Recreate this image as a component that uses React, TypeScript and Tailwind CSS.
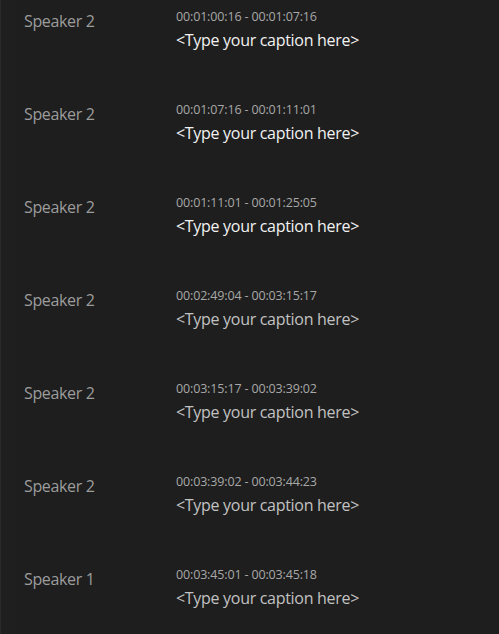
const rows = [
  { speaker: 'Speaker 2', time: '00:01:00:16 - 00:01:07:16', active: true },
  { speaker: 'Speaker 2', time: '00:01:07:16 - 00:01:11:01', active: true },
  { speaker: 'Speaker 2', time: '00:01:11:01 - 00:01:25:05', active: true },
  { speaker: 'Speaker 2', time: '00:02:49:04 - 00:03:15:17', active: false },
  { speaker: 'Speaker 2', time: '00:03:15:17 - 00:03:39:02', active: false },
  { speaker: 'Speaker 2', time: '00:03:39:02 - 00:03:44:23', active: false },
  { speaker: 'Speaker 1', time: '00:03:45:01 - 00:03:45:18', active: false },
]

export default function App() {
  return (
    <div
      className="flex h-[634px] w-[499px] overflow-hidden bg-[#1e1e1e]"
      style={{ fontFamily: '"Open Sans", "Noto Sans", sans-serif' }}
    >
      <div className="w-[15px] shrink-0 border-l border-[#2a2a2a] bg-[#1f1f1f]" />
      <div className="flex flex-1 flex-col">
        <div className="h-[5px] bg-[#212121]" />
        <div className="h-px bg-[#0a0a0a]" />
        <div className="flex flex-col">
          {rows.map((r, i) => (
            <div key={i} className="flex h-[93px]">
              <div className="w-[161px] shrink-0 pl-[9px] pt-[9px] text-[16px] tracking-[-0.35px] text-[#9c9c9c]">
                {r.speaker}
              </div>
              <div className="flex flex-col">
                <div className="pt-[9px] text-[12.5px] leading-[16px] tracking-[-0.15px] text-[#a8a8a8]">
                  {r.time}
                </div>
                <div
                  className={
                    'pt-[4px] text-[16px] leading-[22px] tracking-[-0.3px] ' +
                    (r.active ? 'text-[#f2f2f2]' : 'text-[#c2c2c2]')
                  }
                >
                  &lt;Type your caption here&gt;
                </div>
              </div>
            </div>
          ))}
        </div>
      </div>
    </div>
  )
}
